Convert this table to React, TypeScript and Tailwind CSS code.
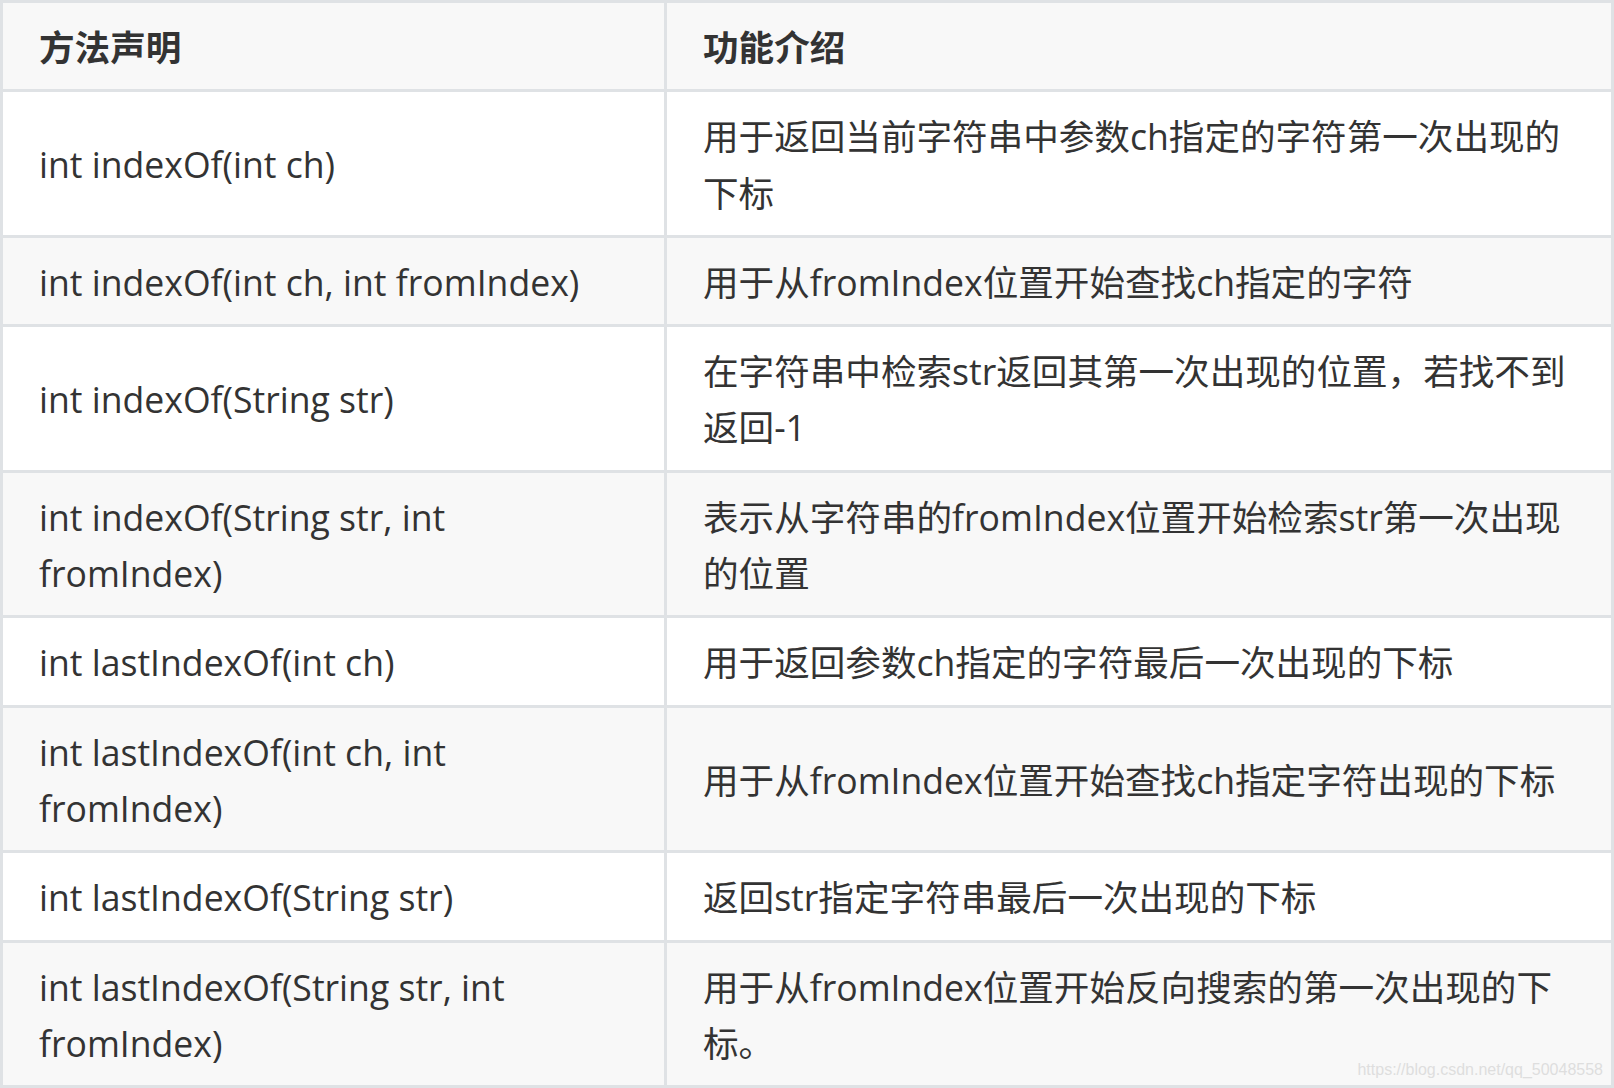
const rows: [string, string][] = [
  ["int indexOf(int ch)", "用于返回当前字符串中参数ch指定的字符第一次出现的下标"],
  ["int indexOf(int ch, int fromIndex)", "用于从fromIndex位置开始查找ch指定的字符"],
  ["int indexOf(String str)", "在字符串中检索str返回其第一次出现的位置，若找不到返回-1"],
  ["int indexOf(String str, int fromIndex)", "表示从字符串的fromIndex位置开始检索str第一次出现的位置"],
  ["int lastIndexOf(int ch)", "用于返回参数ch指定的字符最后一次出现的下标"],
  ["int lastIndexOf(int ch, int fromIndex)", "用于从fromIndex位置开始查找ch指定字符出现的下标"],
  ["int lastIndexOf(String str)", "返回str指定字符串最后一次出现的下标"],
  ["int lastIndexOf(String str, int fromIndex)", "用于从fromIndex位置开始反向搜索的第一次出现的下标。"],
];

const cell = "border-[3px] border-[#dfe2e5] pl-[36px] pr-[30px] pt-[16px] pb-[14px] align-middle text-left";

export default function App() {
  return (
    <div className="relative w-[1614px] h-[1088px] bg-white overflow-hidden font-['Open_Sans','Noto_Sans_CJK_SC',sans-serif] text-[35.6px] leading-[56.3px] text-[#333333]">
      <table className="w-[1614px] table-fixed border-collapse">
        <colgroup>
          <col className="w-[664px]" />
          <col />
        </colgroup>
        <thead>
          <tr className="bg-[#f8f8f8]">
            <th className={`${cell} font-bold`}>方法声明</th>
            <th className={`${cell} font-bold`}>功能介绍</th>
          </tr>
        </thead>
        <tbody>
          {rows.map(([method, desc], i) => (
            <tr key={i} className={i % 2 === 1 ? "bg-[#f8f8f8]" : "bg-white"}>
              <td className={cell}>{method}</td>
              <td className={cell}>{desc}</td>
            </tr>
          ))}
        </tbody>
      </table>

      {/* watermark */}
      <div className="absolute right-[11px] bottom-[8px] font-['Liberation_Sans',sans-serif] text-[16px] leading-[20px] text-[#dedede]">
        https://blog.csdn.net/qq_50048558
      </div>
    </div>
  );
}
